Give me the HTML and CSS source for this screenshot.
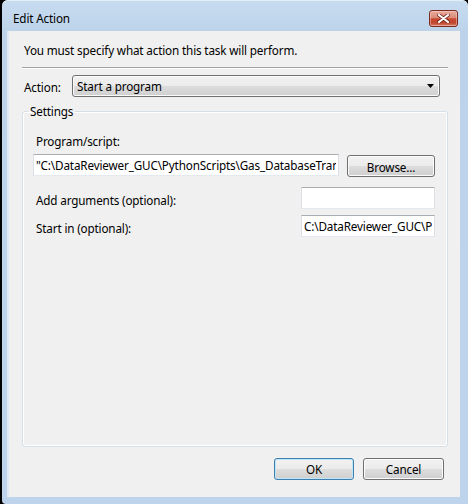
FILE: index.html
```
<!DOCTYPE html>
<html>
<head>
<meta charset="utf-8">
<title>Edit Action</title>
<link rel="stylesheet" href="styles.css">
</head>
<body>
<div class="window">
  <div class="titlebar">
    <span class="title">Edit Action</span>
    <button class="close" aria-label="Close">
      <svg width="13" height="9" viewBox="0 0 13 9">
        <path d="M2 1 L11 8 M11 1 L2 8" stroke="#6e2418" stroke-width="3.6" stroke-linecap="round"/>
        <path d="M2 1 L11 8 M11 1 L2 8" stroke="#ffffff" stroke-width="2.2" stroke-linecap="round"/>
      </svg>
    </button>
  </div>
  <div class="client">
    <p class="intro">You must specify what action this task will perform.</p>
    <div class="separator"></div>
    <div class="action-row">
      <span class="action-label">Action:</span>
      <div class="combo">
        <span>Start a program</span>
        <svg class="arrow" width="7" height="4" viewBox="0 0 7 4"><path d="M0 0 H7 L3.5 4 Z" fill="#000"/></svg>
      </div>
    </div>
    <fieldset class="group">
      <legend class="group-title">Settings</legend>
      <div class="group-body">
        <div class="field-label">Program/script:</div>
        <div class="program-row">
          <div class="textbox program"><span class="clip">"C:\DataReviewer_GUC\PythonScripts\Gas_DatabaseTran</span></div>
          <button class="btn browse">Browse...</button>
        </div>
        <div class="opt-row first">
          <span class="opt-label">Add arguments (optional):</span>
          <div class="textbox small"></div>
        </div>
        <div class="opt-row">
          <span class="opt-label">Start in (optional):</span>
          <div class="textbox small"><span class="clip">C:\DataReviewer_GUC\P</span></div>
        </div>
      </div>
    </fieldset>
    <div class="buttons">
      <button class="btn default ok">OK</button>
      <button class="btn cancel">Cancel</button>
    </div>
  </div>
</div>
</body>
</html>
```

FILE: styles.css
```
* { box-sizing: border-box; }

html, body {
  margin: 0;
  padding: 0;
  background: #000;
}

body {
  font-family: "Noto Sans", "Open Sans", "DejaVu Sans", sans-serif;
  font-size: 11.7px;
  letter-spacing: -0.15px;
  line-height: 16px;
  color: #000;
}

.window {
  width: 466px;
  height: 504px;
  margin-left: 2px;
  display: flex;
  flex-direction: column;
  background: linear-gradient(to bottom, #c8dcf0 0px, #bcd3ea 31px, #bdd4ec 100%);
  border-radius: 6px 6px 0 4px;
  box-shadow: inset 0 1px 0 #e4eef8;
}

.titlebar {
  height: 31px;
  flex: none;
  display: flex;
  align-items: center;
  justify-content: space-between;
  padding: 5px 10px 0 11px;
}

.title {
  color: #000;
}

.close {
  width: 29px;
  height: 17px;
  padding: 0;
  margin: 0;
  border: 1px solid #7a2a1f;
  border-radius: 3px;
  display: flex;
  align-items: center;
  justify-content: center;
  background: linear-gradient(to bottom, #e8ab9e 0%, #dc8b79 45%, #c8472f 52%, #c04530 80%, #d6826c 100%);
  box-shadow: inset 0 0 0 1px rgba(255, 220, 210, 0.45);
}

.close svg { display: block; }

.client {
  flex: 1;
  margin: 0 8px 7px 7px;
  background: #f0f0f0;
  display: flex;
  flex-direction: column;
  padding: 0 12px 0 13px;
  box-shadow: -2px 0 0 #dfe9f5;
}

.intro {
  margin: 11px 0 0 2px;
}

.separator {
  margin-top: 9px;
  height: 2px;
  border-top: 1px solid #a0a0a0;
  border-bottom: 1px solid #ffffff;
}

.action-row {
  margin-top: 6px;
  display: flex;
  align-items: center;
  padding-left: 2px;
  padding-right: 8px;
}

.action-label {
  width: 48px;
  flex: none;
  position: relative;
  top: 1px;
}

.combo {
  flex: 1;
  height: 22px;
  border: 1px solid #707070;
  border-radius: 3px;
  display: flex;
  align-items: center;
  justify-content: space-between;
  padding: 0 5px 0 4px;
  background: linear-gradient(to bottom, #f2f2f2 0%, #ebebeb 50%, #dddddd 51%, #cfcfcf 100%);
  box-shadow: inset 0 0 0 1px #fbfbfb;
}

.arrow { display: block; }

.group {
  flex: 1;
  margin: 6px 0 0 0;
  padding: 0;
  border: 1px solid #d5dfe5;
  border-radius: 3px;
  box-shadow: inset 0 0 0 1px #ffffff;
  min-width: 0;
}

.group-title {
  margin-left: 5px;
  padding: 0 2px;
  line-height: 16px;
}

.group-body {
  padding: 0 12px 0 10px;
}

.field-label {
  margin: 14px 0 0 3px;
}

.program-row {
  margin-top: 5px;
  display: flex;
  gap: 8px;
}

.textbox {
  height: 22px;
  background: #fff;
  border: 1px solid #e3e9ef;
  border-top-color: #abadb3;
  border-left-color: #dbdfe6;
  border-right-color: #dbdfe6;
  padding: 2px 2px 0 2px;
  white-space: nowrap;
  overflow: hidden;
}

.clip {
  display: block;
  overflow: hidden;
  white-space: nowrap;
}

.program {
  flex: 1;
  min-width: 0;
}

.small {
  width: 134px;
}

.opt-row {
  margin-top: 6px;
  display: flex;
  align-items: center;
  justify-content: space-between;
}

.opt-row.first {
  margin-top: 10px;
}

.opt-label {
  margin-left: 3px;
  position: relative;
  top: 2px;
}

.btn {
  font-family: inherit;
  font-size: 11.7px;
  letter-spacing: -0.15px;
  color: #000;
  height: 22px;
  padding: 0;
  margin: 0;
  border: 1px solid #707070;
  border-radius: 3px;
  background: linear-gradient(to bottom, #f2f2f2 0%, #ebebeb 50%, #dddddd 51%, #cfcfcf 100%);
  box-shadow: inset 0 0 0 1px #fcfcfc;
}

.browse {
  width: 88px;
  flex: none;
  margin-top: 1px;
  padding-top: 2px;
}

.buttons {
  margin: 11px 4px 17px 0;
  display: flex;
  justify-content: flex-end;
  gap: 9px;
}

.ok { width: 80px; }
.cancel { width: 81px; }

.default {
  border-color: #3c7fb1;
  box-shadow: inset 0 0 0 1px #bfe6f8;
}
```
